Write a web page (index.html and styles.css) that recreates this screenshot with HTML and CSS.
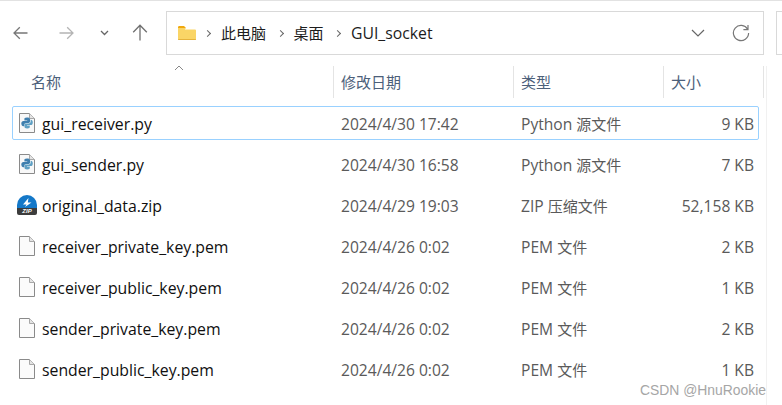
FILE: index.html
```html
<!DOCTYPE html>
<html lang="zh">
<head>
<meta charset="utf-8">
<title>GUI_socket</title>
<link rel="stylesheet" href="styles.css">
</head>
<body>
<svg class="defs" width="0" height="0" aria-hidden="true">
  <defs>
    <symbol id="doc" viewBox="0 0 16 20">
      <path d="M.5.5H10.5L15.5 5.5V19.5H.5Z" fill="#fbfbfb" stroke="#8a8a8a"/>
      <path d="M10.5.5V5.5H15.5" fill="#e4e4e4" stroke="#a8a8a8"/>
    </symbol>
    <symbol id="py" viewBox="0 0 16 20">
      <path d="M.5.5H10.5L15.5 5.5V19.5H.5Z" fill="#f8f8f8" stroke="#8a8a8a"/>
      <path d="M10.5.5V5.5H15.5" fill="#e4e4e4" stroke="#a8a8a8"/>
      <path d="M8 4.5C5.6 4.5 5.4 5.4 5.4 6.2V7.4H8.2V8H4.4C3.2 8 2.3 8.9 2.3 10.6S3.2 13.2 4.3 13.2H5.3V11.7C5.3 10.6 6.2 9.9 7.2 9.9H9.6C10.5 9.9 11 9.3 11 8.5V6.2C11 5.2 10 4.5 8 4.5Z" fill="#3f7fae"/>
      <path d="M8.2 15.5C10.6 15.5 10.8 14.6 10.8 13.8V12.6H8V12H11.8C13 12 13.8 11.1 13.8 9.4S13 6.8 11.9 6.8H11.6V8.4C11.6 9.6 10.8 10.4 9.8 10.4H7C6.1 10.4 5.5 11 5.5 11.8V13.8C5.5 14.8 6.2 15.5 8.2 15.5Z" fill="#5fa0c4"/>
    </symbol>
  </defs>
</svg>
<main class="window">
  <header class="toolbar">
    <nav class="nav">
      <svg class="nav-back" width="15" height="14" viewBox="0 0 15 14"><path d="M14.5 7H1M6.8 1.2 1 7 6.8 12.8" fill="none" stroke="#777" stroke-width="1.3"/></svg>
      <svg class="nav-forward" width="15" height="14" viewBox="0 0 15 14"><path d="M.5 7H14M8.2 1.2 14 7 8.2 12.8" fill="none" stroke="#b4b4b4" stroke-width="1.3"/></svg>
      <svg class="nav-recent" width="9" height="6" viewBox="0 0 9 6"><path d="M1 1 4.5 4.5 8 1" fill="none" stroke="#666" stroke-width="1.3"/></svg>
      <svg class="nav-up" width="16" height="17" viewBox="0 0 16 17"><path d="M8 16.5V1.5M1.2 8.2 8 1.2 14.8 8.2" fill="none" stroke="#707070" stroke-width="1.3"/></svg>
    </nav>
    <div class="address">
      <svg class="folder" width="18" height="14" viewBox="0 0 18 14"><path d="M0 1.5C0 .7.5 0 1.3 0H6L8 2H0Z" fill="#f0a80e"/><path d="M0 2H8L6.8 3.5H17A1 1 0 0 1 18 4.5V13A1 1 0 0 1 17 14H1A1 1 0 0 1 0 13Z" fill="#fad566"/><path d="M0 13H18V13.2A.8.8 0 0 1 17.2 14H.8A.8.8 0 0 1 0 13.2Z" fill="#e6b33c"/></svg>
      <span class="sep"></span><span class="crumb cjk">此电脑</span>
      <span class="sep"></span><span class="crumb cjk">桌面</span>
      <span class="sep"></span><span class="crumb">GUI_socket</span>
      <span class="address-actions">
        <svg width="14" height="8" viewBox="0 0 14 8"><path d="M1 1 7 7 13 1" fill="none" stroke="#666" stroke-width="1.2"/></svg>
        <svg width="18" height="18" viewBox="0 0 18 18"><path d="M15.6 5.2A7.6 7.6 0 1 0 16.6 9M16 1V5.6H11.4" fill="none" stroke="#777" stroke-width="1.2"/></svg>
      </span>
    </div>
    <div class="search"></div>
  </header>
  <section class="list">
    <div class="sort-caret"><svg width="10" height="6" viewBox="0 0 10 6"><path d="M1 5 5 1 9 5" fill="none" stroke="#888" stroke-width="1"/></svg></div>
    <div class="head">
      <div class="hcell hname">名称</div>
      <div class="hcell">修改日期</div>
      <div class="hcell">类型</div>
      <div class="hcell">大小</div>
    </div>
    <div class="row selected">
      <svg class="icon" width="16" height="20"><use href="#py"/></svg><span class="name">gui_receiver.py</span>
      <span class="meta">2024/4/30 17:42</span><span class="meta">Python <span class="cjk">源文件</span></span><span class="meta size">9 KB</span>
    </div>
    <div class="row">
      <svg class="icon" width="16" height="20"><use href="#py"/></svg><span class="name">gui_sender.py</span>
      <span class="meta">2024/4/30 16:58</span><span class="meta">Python <span class="cjk">源文件</span></span><span class="meta size">7 KB</span>
    </div>
    <div class="row">
      <span class="zip">
        <svg width="20" height="20" viewBox="0 0 20 20"><path d="M0 13V10A10 10 0 0 1 20 10V13Z" fill="#1478c8"/><path d="M11.5 3 6 9.5H9.5L8 12 14.5 7.5H10.8Z" fill="#fff"/><path d="M0 13H20V18A2 2 0 0 1 18 20H2A2 2 0 0 1 0 18Z" fill="#3c3c3c"/></svg>
        <span class="zip-label">ZIP</span>
      </span><span class="name">original_data.zip</span>
      <span class="meta">2024/4/29 19:03</span><span class="meta">ZIP <span class="cjk">压缩文件</span></span><span class="meta size">52,158 KB</span>
    </div>
    <div class="row">
      <svg class="icon" width="16" height="20"><use href="#doc"/></svg><span class="name">receiver_private_key.pem</span>
      <span class="meta">2024/4/26 0:02</span><span class="meta">PEM <span class="cjk">文件</span></span><span class="meta size">2 KB</span>
    </div>
    <div class="row">
      <svg class="icon" width="16" height="20"><use href="#doc"/></svg><span class="name">receiver_public_key.pem</span>
      <span class="meta">2024/4/26 0:02</span><span class="meta">PEM <span class="cjk">文件</span></span><span class="meta size">1 KB</span>
    </div>
    <div class="row">
      <svg class="icon" width="16" height="20"><use href="#doc"/></svg><span class="name">sender_private_key.pem</span>
      <span class="meta">2024/4/26 0:02</span><span class="meta">PEM <span class="cjk">文件</span></span><span class="meta size">2 KB</span>
    </div>
    <div class="row">
      <svg class="icon" width="16" height="20"><use href="#doc"/></svg><span class="name">sender_public_key.pem</span>
      <span class="meta">2024/4/26 0:02</span><span class="meta">PEM <span class="cjk">文件</span></span><span class="meta size">1 KB</span>
    </div>
    <div class="watermark">CSDN @HnuRookie</div>
  </section>
</main>
</body>
</html>
```
FILE: styles.css
```css
* { box-sizing: border-box; }
html, body { margin: 0; height: 100%; background: #fff; overflow: hidden; }
body { font-family: "Open Sans", "Noto Sans CJK SC", sans-serif; font-size: 15px; color: #1a1a1a; }
.defs { position: absolute; }
.window { height: 405px; border-top: 1px solid #e2e2e2; display: flex; flex-direction: column; }
.cjk { font-size: 15px; }

.toolbar { display: flex; height: 65px; padding-top: 10px; align-items: flex-start; }
.nav { width: 166px; height: 44px; display: flex; align-items: center; padding-left: 13px; flex: none; }
.nav-forward { margin-left: 31px; }
.nav-recent { margin-left: 26px; }
.nav-up { margin-left: 23px; margin-top: -1px; }

.address { width: 598px; height: 44px; border: 1px solid #d9d9d9; display: flex; align-items: center; padding-left: 11px; flex: none; }
.folder { flex: none; }
.crumb { color: #1c1c1c; font-size: 15.75px; line-height: 20px; }
.crumb.cjk { font-size: 15px; }
.sep { width: 5px; height: 5px; border-top: 1.3px solid #666; border-right: 1.3px solid #666; transform: rotate(45deg); margin: 0 11px 0 9px; flex: none; }
.crumb + .sep { margin-left: 11.5px; }
.address-actions { margin-left: auto; display: flex; align-items: center; gap: 27px; padding-right: 13px; }
.search { width: 12px; height: 44px; margin-left: 12px; border: 1px solid #d9d9d9; border-right: 0; flex: none; }

.list { position: relative; flex: 1; }
.list::after { content: ""; position: absolute; left: 766px; top: 0; bottom: 0; width: 1px; background: #f1f1f1; }
.sort-caret { position: absolute; left: 174px; top: -1px; line-height: 0; }
.head { display: grid; grid-template-columns: 334px 180px 150px 100px; height: 32px; }
.hcell { border-right: 1px solid #e4e4e4; padding-left: 7px; font-size: 15px; color: #4c607a; line-height: 32px; }
.hname { padding-left: 31px; }

.row { display: grid; grid-template-columns: 20px 304px 180px 140px 1fr; align-items: center; height: 34px; width: 747px; margin: 8px 0 7px 12px; border: 1px solid transparent; padding-left: 4px; padding-right: 4px; }
.row + .row { margin-top: 7px; }
.row.selected { border-color: #99d1ff; border-radius: 2px; margin-bottom: 7px; }
.row .icon { margin-left: 2px; }
.name { padding-left: 5px; font-size: 15.8px; color: #101010; white-space: nowrap; position: relative; top: 1px; }
.meta { font-size: 15.6px; color: #5a5a5a; white-space: nowrap; position: relative; top: 1px; }
.size { text-align: right; }

.zip { position: relative; width: 20px; height: 20px; display: block; line-height: 0; }
.zip-label { position: absolute; left: 0; right: 0; bottom: 1px; text-align: center; font: italic bold 6px/6px "Liberation Sans", sans-serif; color: #fff; }

.watermark { position: absolute; right: 16px; bottom: 7px; font: 13.9px/15px "Liberation Sans", sans-serif; color: #a6a6a6; }
```
